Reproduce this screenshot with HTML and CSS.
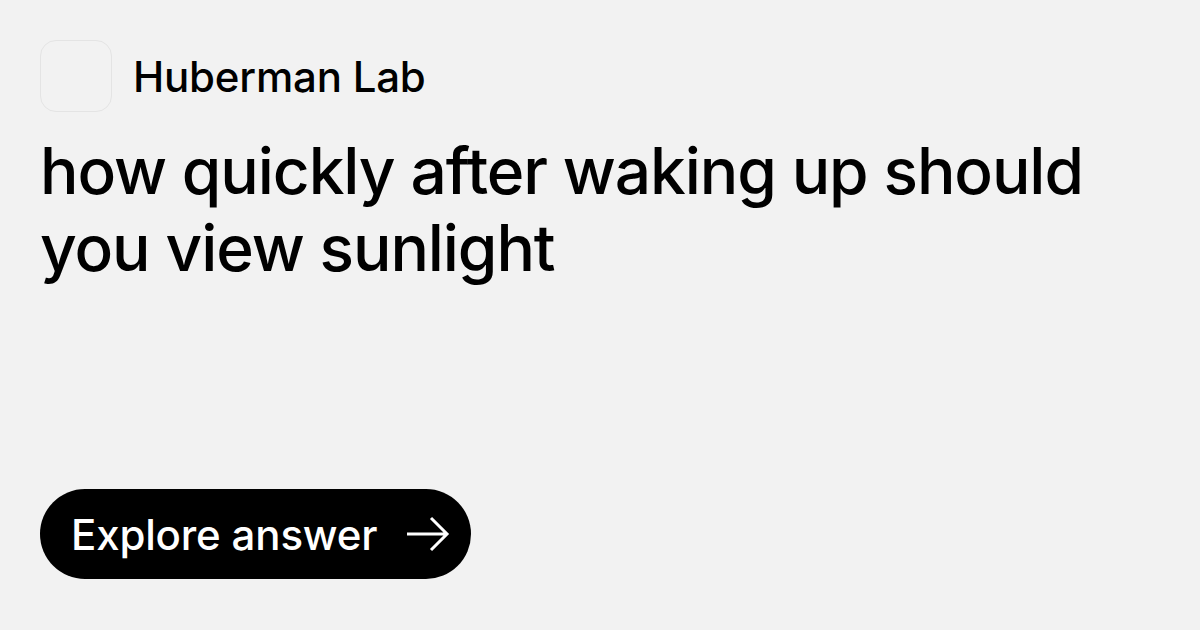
FILE: index.html
```html
<!DOCTYPE html>
<html>
<head>
<meta charset="utf-8">
<link rel="stylesheet" href="styles.css">
</head>
<body>
<div class="card">
  <div class="brand">
    <div class="logo"></div>
    <div class="name">Huberman Lab</div>
  </div>
  <h1 class="question">how quickly after waking up should you view sunlight</h1>
  <div class="spacer"></div>
  <div class="cta">
    <span class="cta-label">Explore answer</span>
    <svg class="arrow" width="44" height="36" viewBox="0 0 44 36" fill="none" stroke="#fff" stroke-width="3" stroke-linecap="butt" stroke-linejoin="miter"><path d="M1 18h40M25 2l16 16-16 16"/></svg>
  </div>
</div>
</body>
</html>
```
FILE: styles.css
```css
html, body {
  margin: 0;
  padding: 0;
  background: #f2f2f2;
}
.card {
  width: 1200px;
  height: 630px;
  box-sizing: border-box;
  padding: 40px 40px 51px;
  display: flex;
  flex-direction: column;
  font-family: Inter, "Noto Sans", sans-serif;
  color: #000;
}
.brand {
  display: flex;
  align-items: center;
  gap: 21px;
}
.logo {
  width: 70px;
  height: 70px;
  border: 1px solid #e4e4e4;
  border-radius: 16px;
  background: #f2f2f2;
}
.name {
  font-size: 42px;
  font-weight: 500;
  letter-spacing: -0.005em;
}
.question {
  margin: 20px 0 0;
  font-size: 64px;
  font-weight: 500;
  letter-spacing: -0.017em;
  line-height: 77px;
  max-width: 1100px;
}
.spacer {
  flex: 1;
}
.cta {
  align-self: flex-start;
  display: flex;
  align-items: center;
  gap: 29px;
  height: 90px;
  padding: 0 21px 0 31px;
  background: #000;
  color: #fff;
  border-radius: 45px;
}
.cta-label {
  font-size: 42px;
  font-weight: 500;
  letter-spacing: -0.004em;
}
.arrow {
  display: block;
}
```
